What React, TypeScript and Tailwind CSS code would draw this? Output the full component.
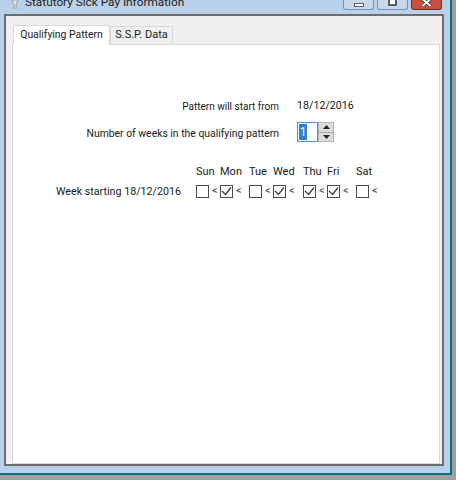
const DAYS = [
  { label: 'Sun', checked: false, cell: 'w-[24px]' },
  { label: 'Mon', checked: true, cell: 'w-[29px]' },
  { label: 'Tue', checked: false, cell: 'w-[24px]' },
  { label: 'Wed', checked: true, cell: 'w-[30px]' },
  { label: 'Thu', checked: true, cell: 'w-[24px]' },
  { label: 'Fri', checked: true, cell: 'w-[29px]' },
  { label: 'Sat', checked: false, cell: 'w-[24px]' },
];

function CheckBox({ checked }: { checked: boolean }) {
  return (
    <span className="w-[13px] h-[13px] border border-[#4a4a4a] bg-white flex items-center justify-center shrink-0">
      {checked && (
        <svg width="11" height="11" viewBox="0 0 11 11" fill="none">
          <path d="M1 5 L4.5 8.5 L10 1.5" stroke="#444444" strokeWidth="1.4" />
        </svg>
      )}
    </span>
  );
}

export default function App() {
  return (
    <div className="w-[456px] h-[480px] bg-[#a0a0a0] overflow-hidden text-[11px] text-[#1a1a1a] font-['Roboto',sans-serif]">
      <div className="w-[452px] h-[475px] bg-[#b9d1ea] border-r-2 border-b-2 border-[#0f6f7c] flex flex-col">
        {/* Title bar, cut off at the top of the shot */}
        <div className="h-[14px] flex items-end overflow-hidden relative shrink-0">
          <svg className="ml-[10px] mb-[5px]" width="10" height="9" viewBox="0 0 10 9" fill="none">
            <path d="M2 0 L8 0 L6 5 L6 9 L4 9 L4 5 Z" fill="#dfe6ec" stroke="#7f8a94" strokeWidth="0.7" />
          </svg>
          <span className="ml-[5px] text-[11.8px] leading-[14px] mb-[5px] text-[#222222]">Statutory Sick Pay Information</span>
          <div className="absolute top-0 left-[343px] flex gap-[3px]">
            <div className="w-[31px] h-[10px] rounded-b-[3px] border border-t-0 border-[#7d93ab] bg-[#c6d8ea] flex items-center justify-center">
              <span className="w-[10px] h-[4px] bg-white border border-[#55606c]" />
            </div>
            <div className="w-[31px] h-[10px] rounded-b-[3px] border border-t-0 border-[#7d93ab] bg-[#c6d8ea] flex items-start justify-center">
              <span className="w-[9px] h-[6px] bg-white border-2 border-t-0 border-[#55606c]" />
            </div>
            <div className="w-[31px] h-[10px] rounded-b-[3px] border border-t-0 border-[#7c2a2a] bg-[#c7503f] flex items-start justify-center">
              <svg width="13" height="7" viewBox="0 0 13 7" fill="none">
                <path d="M2.5 -1 L10.5 6 M10.5 -1 L2.5 6" stroke="#4a2020" strokeWidth="3.4" />
                <path d="M2.5 -1 L10.5 6 M10.5 -1 L2.5 6" stroke="#ffffff" strokeWidth="2" />
              </svg>
            </div>
          </div>
        </div>

        {/* Client area */}
        <div className="ml-[4px] mr-[6px] h-[452px] border-2 border-[#6d6d6d] bg-[#f0f0f0] px-[6px] flex flex-col">
          <div className="h-[28px] flex items-end shrink-0 pl-[1px]">
            <div className="w-[97px] h-[20px] bg-white border border-b-0 border-[#d9d9d9] flex items-center justify-center relative top-[1px] pb-[2px] text-[10.4px]">Qualifying Pattern</div>
            <div className="w-[63px] h-[18px] bg-[#f0f0f0] border border-b-0 border-[#d9d9d9] flex items-center justify-center pb-[1px]">S.S.P. Data</div>
          </div>
          <div className="h-[420px] w-[428px] bg-white border border-[#d9d9d9] pt-[53px]">
            <div className="flex items-center h-[14px] pt-[2px]">
              <span className="w-[266px] text-right text-[10px]">Pattern will start from</span>
              <span className="ml-[18px] text-[10.7px]">18/12/2016</span>
            </div>
            <div className="flex items-center h-[20px] mt-[10px]">
              <span className="w-[266px] text-right text-[10.4px] pt-[4px]">Number of weeks in the qualifying pattern</span>
              <div className="ml-[18px] w-[37px] h-[20px] flex">
                <div className="w-[21px] h-full border border-[#4a90d0] bg-white pl-[1px] pt-[1px]">
                  <span className="bg-[#2f7fd6] text-white text-[12px] leading-[16px] block w-[8px] text-center">1</span>
                </div>
                <div className="w-[16px] h-full flex flex-col border border-[#b5b5b5] bg-[#dcdcdc]">
                  <span className="flex-1 flex items-center justify-center border-b border-[#a8a8a8] text-[#222222]">
                    <svg width="7" height="4" viewBox="0 0 7 4"><path d="M3.5 0 L7 4 L0 4 Z" fill="currentColor" /></svg>
                  </span>
                  <span className="flex-1 flex items-center justify-center text-[#222222]">
                    <svg width="7" height="4" viewBox="0 0 7 4"><path d="M0 0 L7 0 L3.5 4 Z" fill="currentColor" /></svg>
                  </span>
                </div>
              </div>
            </div>
            <div className="flex h-[14px] mt-[23px] pl-[183px]">
              {DAYS.map(day => (
                <span key={day.label} className={`${day.cell} leading-[14px]`}>{day.label}</span>
              ))}
            </div>
            <div className="flex items-center h-[14px] mt-[5px]">
              <span className="w-[168px] text-right whitespace-nowrap text-[10.7px] pt-[2px]">Week starting 18/12/2016</span>
              <div className="ml-[15px] flex">
                {DAYS.map(day => (
                  <div key={day.label} className={`${day.cell} flex items-center`}>
                    <CheckBox checked={day.checked} />
                    <span className="ml-[3px] text-[#555555] leading-[14px]">&lt;</span>
                  </div>
                ))}
              </div>
            </div>
          </div>
        </div>
      </div>
    </div>
  );
}
